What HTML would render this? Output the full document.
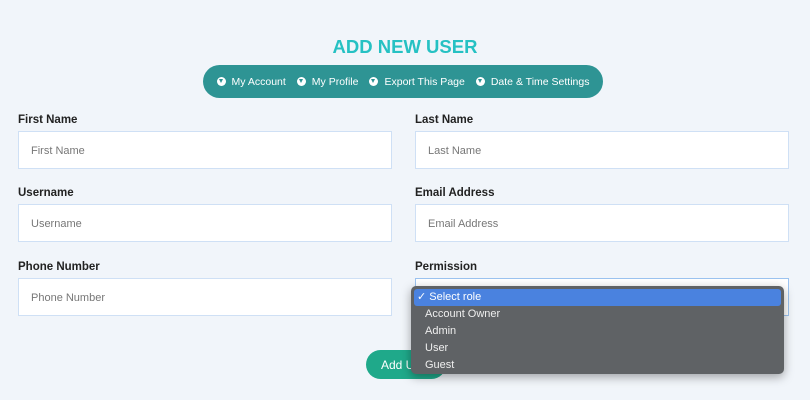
<!DOCTYPE html>
<html><head><style>
*{box-sizing:border-box;margin:0;padding:0}
body{width:810px;height:400px;background:#f1f5fa;font-family:"Liberation Sans",sans-serif;position:relative;overflow:hidden}
.t{position:absolute;left:0;width:810px;top:36px;text-align:center;color:#26c1c3;font-size:18.5px;font-weight:bold;letter-spacing:0px}
.nav{position:absolute;left:203px;top:65px;width:400px;height:33px;border-radius:17px;background:#2e9494;color:#fff;font-size:10.5px;display:flex;align-items:center;justify-content:center;gap:11px}
.nav span{display:flex;align-items:center;gap:6px}
.nav i{width:9px;height:9px;border-radius:50%;background:#fff;display:inline-block;position:relative}
.nav i:after{content:"";position:absolute;left:2px;top:2px;border:2.5px solid transparent;border-top:4px solid #2e9494}
.l{position:absolute;font-size:11.5px;font-weight:bold;color:#222}
.in{position:absolute;width:374px;height:38px;background:#fff;border:1px solid #cfe0f5;font-size:11px;color:#777;padding:13px 0 0 12px}
.dd{position:absolute;left:411px;top:286px;width:373px;height:88px;background:#5f6265;border-radius:5px;box-shadow:0 3px 10px rgba(0,0,0,.35);color:#eee;font-size:11px;padding-top:3px}
.dd div{height:17px;line-height:16px;padding-left:14px}
.dd .s{background:#4a82df;color:#fff;margin:0 3px;border-radius:3px;padding-left:3px}
.btn{position:absolute;left:366px;top:350px;width:80px;height:29px;border-radius:15px;background:#1fa98a;color:#fff;font-size:12px;padding:8px 0 0 15px}
</style></head><body>
<div class="t">ADD NEW USER</div>
<div class="nav"><span><i></i>My Account</span><span><i></i>My Profile</span><span><i></i>Export This Page</span><span><i></i>Date &amp; Time Settings</span></div>
<div class="l" style="left:18px;top:114px">First Name</div>
<div class="l" style="left:415px;top:114px">Last Name</div>
<div class="in" style="left:18px;top:131px">First Name</div>
<div class="in" style="left:415px;top:131px">Last Name</div>
<div class="l" style="left:18px;top:187px">Username</div>
<div class="l" style="left:415px;top:187px">Email Address</div>
<div class="in" style="left:18px;top:204px">Username</div>
<div class="in" style="left:415px;top:204px">Email Address</div>
<div class="l" style="left:18px;top:261px">Phone Number</div>
<div class="l" style="left:415px;top:261px">Permission</div>
<div class="in" style="left:18px;top:278px">Phone Number</div>
<div class="in" style="left:415px;top:278px;border-color:#9cc3f0"></div>
<div class="btn">Add User</div>
<div class="dd"><div class="s">✓ Select role</div><div>Account Owner</div><div>Admin</div><div>User</div><div>Guest</div></div>
</body></html>
